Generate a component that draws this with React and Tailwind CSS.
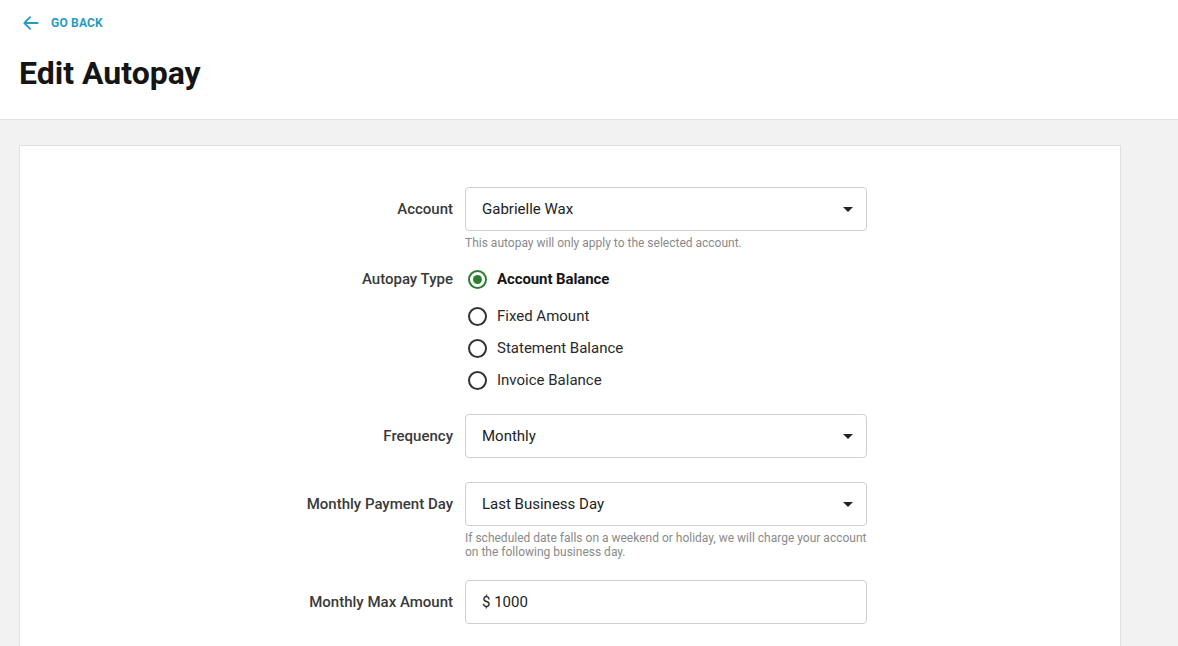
import React, { useState } from 'react';

const Caret = () => (
  <svg width="10" height="5" viewBox="0 0 10 5" className="shrink-0">
    <path d="M0 0h10L5 5z" fill="#222" />
  </svg>
);

const Label = ({ children, h = 'h-[44px]' }) => (
  <div className={`w-[445px] shrink-0 pr-3 text-right text-[15px] font-medium text-[#3a3a3a] ${h} flex items-center justify-end`}>
    {children}
  </div>
);

const Row = ({ label, children, className = '' }) => (
  <div className={`flex items-start ${className}`}>
    <Label>{label}</Label>
    <div className="w-[402px]">{children}</div>
  </div>
);

const SelectBox = ({ value }) => (
  <div className="h-[44px] w-full rounded border border-[#cfcfcf] bg-white flex items-center justify-between pl-4 pr-[13px] text-[15px] text-[#222]">
    <span>{value}</span>
    <Caret />
  </div>
);

const Helper = ({ children }) => (
  <p className="mt-[5px] text-[12px] leading-[14px] text-[#8a8a8a]">{children}</p>
);

const App = () => {
  const [type, setType] = useState('Account Balance');
  const types = ['Account Balance', 'Fixed Amount', 'Statement Balance', 'Invoice Balance'];

  return (
    <div className="min-h-[646px] bg-[#f2f2f2] font-['Roboto',sans-serif]">
      <header className="bg-white border-b border-[#e2e2e2] h-[120px] px-[19px] pt-[13px]">
        <button className="flex items-center gap-[10px] h-[20px] text-[#2a9bc0]">
          <svg width="20" height="20" viewBox="0 0 24 24" fill="none" stroke="#2a9bc0" strokeWidth="2.2" strokeLinecap="round" strokeLinejoin="round" className="ml-[2px]">
            <path d="M20 12H4M11 5l-7 7 7 7" />
          </svg>
          <span className="text-[12px] font-bold tracking-[0.2px]">GO BACK</span>
        </button>
        <h1 className="mt-[20px] text-[32px] font-bold text-[#151515] leading-[40px]">Edit Autopay</h1>
      </header>

      <div className="pl-[19px] pt-[25px]">
        <div className="w-[1102px] h-[520px] bg-white border border-[#e0e0e0] pt-[41px]">
          <Row label="Account">
            <SelectBox value="Gabrielle Wax" />
            <Helper>This autopay will only apply to the selected account.</Helper>
          </Row>

          <div className="flex mt-[17px]">
            <Label h="h-[24px]">Autopay Type</Label>
            <div className="flex flex-col">
              {types.map((t, i) => (
                <label
                  key={t}
                  onClick={() => setType(t)}
                  className={`flex items-center h-[24px] cursor-pointer ${i === 1 ? 'mt-[13px]' : i > 1 ? 'mt-[8px]' : ''}`}
                >
                  <span
                    className={`ml-[3px] w-[19px] h-[19px] rounded-full border-2 flex items-center justify-center ${
                      type === t ? 'border-[#2e7d32]' : 'border-[#333]'
                    }`}
                  >
                    {type === t && <span className="w-[9px] h-[9px] rounded-full bg-[#2e7d32]" />}
                  </span>
                  <span
                    className={`ml-[10px] text-[15px] ${type === t ? 'font-bold text-[#151515] tracking-[-0.1px]' : 'text-[#2a2a2a]'}`}
                  >
                    {t}
                  </span>
                </label>
              ))}
            </div>
          </div>

          <Row label="Frequency" className="mt-[22px]">
            <SelectBox value="Monthly" />
          </Row>

          <Row label="Monthly Payment Day" className="mt-[24px]">
            <SelectBox value="Last Business Day" />
            <Helper>
              If scheduled date falls on a weekend or holiday, we will charge your account on the following business day.
            </Helper>
          </Row>

          <Row label="Monthly Max Amount" className="mt-[21px]">
            <div className="h-[44px] w-full rounded border border-[#cfcfcf] bg-white flex items-center pl-4 text-[15px] text-[#222]">
              $ 1000
            </div>
          </Row>
        </div>
      </div>
    </div>
  );
};

export default App;
